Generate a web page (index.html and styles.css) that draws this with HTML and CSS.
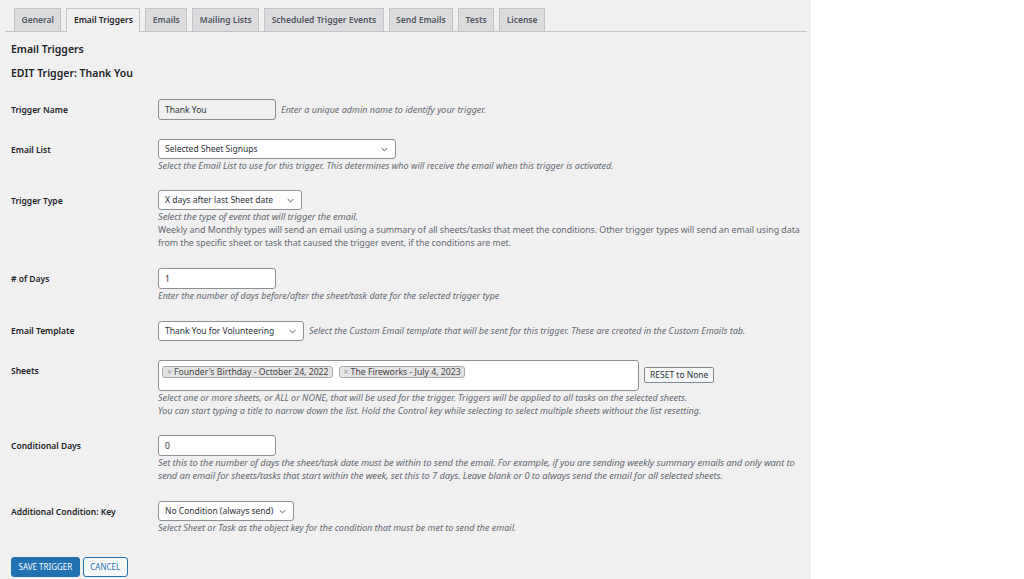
FILE: index.html
```html
<html>
  <head>
    <title>Email Triggers</title>
    <link rel="stylesheet" href="styles.css">
  </head>
  <body>
    <div id="wrap">
      <div id="tabs">
        <div class="tab">General</div>
        <div class="tab active">Email Triggers</div>
        <div class="tab">Emails</div>
        <div class="tab">Mailing Lists</div>
        <div class="tab">Scheduled Trigger Events</div>
        <div class="tab">Send Emails</div>
        <div class="tab">Tests</div>
        <div class="tab">License</div>
      </div>
      <h2>Email Triggers</h2>
      <h3>EDIT Trigger: Thank You</h3>
      <div class="form">
        <div class="row">
          <div class="label">Trigger Name</div>
          <div class="field inline">
            <div class="input readonly w117">Thank You</div>
            <span class="desc">Enter a unique admin name to identify your trigger.</span>
          </div>
        </div>
        <div class="row">
          <div class="label">Email List</div>
          <div class="field">
            <div class="select w237">Selected Sheet Signups<svg class="chev" viewBox="0 0 10 6"><path d="M1 1l4 4 4-4"/></svg></div>
            <p class="desc">Select the Email List to use for this trigger. This determines who will receive the email when this trigger is activated.</p>
          </div>
        </div>
        <div class="row">
          <div class="label">Trigger Type</div>
          <div class="field">
            <div class="select w143">X days after last Sheet date<svg class="chev" viewBox="0 0 10 6"><path d="M1 1l4 4 4-4"/></svg></div>
            <p class="desc wide"><i>Select the type of event that will trigger the email.</i><br><span class="plain">Weekly and Monthly types will send an email using a summary of all sheets/tasks that meet the conditions. Other trigger types will send an email using data<br>from the specific sheet or task that caused the trigger event, if the conditions are met.</span></p>
          </div>
        </div>
        <div class="row">
          <div class="label">&#35; of Days</div>
          <div class="field">
            <div class="input w117">1</div>
            <p class="desc">Enter the number of days before/after the sheet/task date for the selected trigger type</p>
          </div>
        </div>
        <div class="row">
          <div class="label">Email Template</div>
          <div class="field inline">
            <div class="select w145">Thank You for Volunteering<svg class="chev" viewBox="0 0 10 6"><path d="M1 1l4 4 4-4"/></svg></div>
            <span class="desc">Select the Custom Email template that will be sent for this trigger. These are created in the Custom Emails tab.</span>
          </div>
        </div>
        <div class="row">
          <div class="label">Sheets</div>
          <div class="field">
            <div class="inline top">
              <div class="multi">
                <span class="chip"><span class="x">&times;</span>Founder's Birthday - October 24, 2022</span>
                <span class="chip"><span class="x">&times;</span>The Fireworks - July 4, 2023</span>
              </div>
              <div class="button">RESET to None</div>
            </div>
            <p class="desc">Select one or more sheets, or ALL or NONE, that will be used for the trigger. Triggers will be applied to all tasks on the selected sheets.<br>You can start typing a title to narrow down the list. Hold the Control key while selecting to select multiple sheets without the list resetting.</p>
          </div>
        </div>
        <div class="row">
          <div class="label">Conditional Days</div>
          <div class="field">
            <div class="input w117">0</div>
            <p class="desc wide">Set this to the number of days the sheet/task date must be within to send the email. For example, if you are sending weekly summary emails and only want to<br>send an email for sheets/tasks that start within the week, set this to 7 days. Leave blank or 0 to always send the email for all selected sheets.</p>
          </div>
        </div>
        <div class="row">
          <div class="label">Additional Condition: Key</div>
          <div class="field">
            <div class="select w135">No Condition (always send)<svg class="chev" viewBox="0 0 10 6"><path d="M1 1l4 4 4-4"/></svg></div>
            <p class="desc">Select Sheet or Task as the object key for the condition that must be met to send the email.</p>
          </div>
        </div>
      </div>
      <div class="actions">
        <div class="btn-primary">SAVE TRIGGER</div>
        <div class="btn-secondary">CANCEL</div>
      </div>
    </div>
  </body>
</html>
```

FILE: styles.css
```css
html, body {
  margin: 0;
  padding: 0;
  background: #ffffff;
}
body {
  font-family: "Noto Sans", "Open Sans", sans-serif;
  color: #1d2327;
  font-size: 9px;
}
#wrap {
  width: 811px;
  height: 579px;
  background: #f0f0f1;
  padding: 8px 0 0 0;
  box-sizing: border-box;
  overflow: hidden;
}
#tabs {
  display: flex;
  gap: 5px;
  margin: 0 4px 0 5px;
  padding-left: 9px;
  border-bottom: 1px solid #c3c4c7;
  height: 23px;
}
.tab {
  height: 23px;
  box-sizing: border-box;
  padding: 0 6.5px;
  line-height: 22px;
  border: 1px solid #c3c4c7;
  border-bottom: none;
  background: #dcdcde;
  color: #50575e;
  font-weight: 600;
  font-size: 8.5px;
  white-space: nowrap;
}
.tab.active {
  background: #f0f0f1;
  color: #1d2327;
  height: 24px;
}
h2, h3 {
  margin: 0;
  padding-left: 11px;
  font-size: 10.5px;
  font-weight: 600;
  line-height: 16px;
  color: #1d2327;
}
h2 {
  margin-top: 9px;
}
h3 {
  margin-top: 8px;
}
.form {
  margin-top: 9px;
  padding-left: 11px;
}
.row {
  display: grid;
  grid-template-columns: 147px 1fr;
  padding: 9px 0 9.5px 0;
}
.label {
  font-weight: 600;
  line-height: 21px;
  font-size: 8.5px;
  color: #1d2327;
  white-space: nowrap;
}
.field.inline, .inline {
  display: flex;
  align-items: center;
  gap: 5px;
}
.inline.top {
  align-items: flex-start;
}
.input, .select {
  height: 21px;
  box-sizing: border-box;
  border: 1px solid #8c8f94;
  border-radius: 3px;
  background: #ffffff;
  padding: 0 6px;
  line-height: 19px;
  font-size: 8.5px;
  color: #2c3338;
  white-space: nowrap;
}
.input.readonly {
  background: #f0f0f1;
}
.select {
  position: relative;
  height: 20px;
  line-height: 18px;
}
.chev {
  position: absolute;
  right: 7px;
  top: 7px;
  width: 7px;
  height: 5px;
  fill: none;
  stroke: #50575e;
  stroke-width: 1.4;
}
.w117 { width: 118px; }
.w237 { width: 238px; }
.w143 { width: 144px; }
.w145 { width: 146px; }
.w135 { width: 136px; }
.desc {
  margin: 0;
  font-style: italic;
  color: #646970;
  font-size: 9px;
  line-height: 13px;
  white-space: nowrap;
}
.desc.wide {
  font-size: 9.4px;
  letter-spacing: -0.1px;
}
.desc .plain {
  font-style: normal;
  font-size: 8.9px;
  letter-spacing: -0.05px;
}
.multi {
  width: 481px;
  height: 31px;
  box-sizing: border-box;
  border: 1px solid #8c8f94;
  border-radius: 3px;
  background: #ffffff;
  padding: 5px 3px;
  display: flex;
  align-items: flex-start;
  gap: 6px;
}
.chip {
  height: 12px;
  box-sizing: border-box;
  border: 1px solid #aaaaaa;
  border-radius: 3px;
  background: #e4e4e4;
  padding: 0 3px 0 4px;
  line-height: 10px;
  font-size: 8.7px;
  color: #444444;
  white-space: nowrap;
}
.chip .x {
  color: #999999;
  margin-right: 2px;
}
.button {
  margin-top: 7px;
  height: 16px;
  box-sizing: border-box;
  border: 1px solid #7e8993;
  border-radius: 2px;
  background: #f6f7f7;
  padding: 0 5px;
  line-height: 14px;
  font-size: 8.5px;
  color: #2c3338;
  white-space: nowrap;
}
.actions {
  display: flex;
  gap: 3px;
  padding-left: 11px;
  margin-top: 14px;
}
.btn-primary, .btn-secondary {
  height: 20px;
  box-sizing: border-box;
  border-radius: 3px;
  border: 1px solid #2271b1;
  padding: 0 6.5px;
  line-height: 18px;
  font-size: 8px;
  white-space: nowrap;
}
.btn-primary {
  background: #2271b1;
  color: #ffffff;
}
.btn-secondary {
  background: #f6f7f7;
  color: #2271b1;
}
```
